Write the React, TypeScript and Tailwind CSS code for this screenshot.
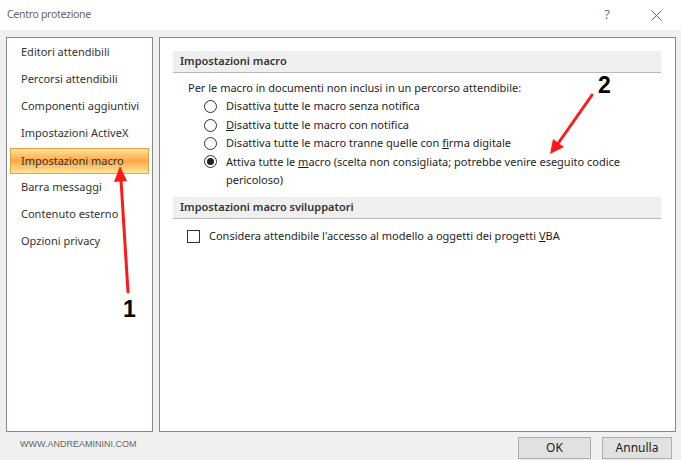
import React from "react";

const font = { fontFamily: '"Segoe UI", "Noto Sans", "Open Sans", sans-serif' };

function Radio({ checked }: { checked?: boolean }) {
  return (
    <span className="w-[13px] h-[13px] rounded-full border border-[#333] bg-white flex items-center justify-center shrink-0">
      {checked && <span className="w-[7px] h-[7px] rounded-full bg-[#222]" />}
    </span>
  );
}

function Arrows() {
  return (
    <svg className="absolute left-0 top-0 pointer-events-none" width="681" height="460">
      <line x1="128" y1="292" x2="121" y2="180" stroke="#ff1a1a" strokeWidth="3" strokeLinecap="round" />
      <polygon points="120,166 114,182 127,181" fill="#ff1a1a" />
      <line x1="592" y1="95" x2="557" y2="145" stroke="#ff1a1a" strokeWidth="3" strokeLinecap="round" />
      <polygon points="550,154 553,139 564,147" fill="#ff1a1a" />
    </svg>
  );
}

export default function App() {
  const items = [
    "Editori attendibili",
    "Percorsi attendibili",
    "Componenti aggiuntivi",
    "Impostazioni ActiveX",
    "Impostazioni macro",
    "Barra messaggi",
    "Contenuto esterno",
    "Opzioni privacy",
  ];
  return (
    <div className="relative w-[681px] h-[460px] bg-[#f0f0f0] flex flex-col text-[11px] text-[#1e1e1e] overflow-hidden whitespace-nowrap" style={font}>
      <div className="h-[30px] bg-white flex items-center pl-[7px] pr-[19px] shrink-0">
        <span className="text-[10.5px] text-[#666] tracking-[-0.3px]">Centro protezione</span>
        <span className="ml-auto text-[13px] text-[#777] mr-[41px]">?</span>
        <svg width="11" height="11" viewBox="0 0 11 11">
          <path d="M0.5 0.5 L10.5 10.5 M10.5 0.5 L0.5 10.5" stroke="#666" strokeWidth="1" />
        </svg>
      </div>
      <div className="flex gap-[6px] pl-[6px] pr-[5px] pt-[7px] h-[402px] shrink-0">
        <div className="w-[147px] border border-[#838790] bg-white pt-[1px] px-[3px] flex flex-col">
          {items.map((it) =>
            it === "Impostazioni macro" ? (
              <div
                key={it}
                className="h-[26px] mt-[1px] flex items-center pl-[10px] border border-[#e6a23c] bg-gradient-to-b from-[#fde39a] via-[#ffa640] to-[#fde79b] text-[#333]"
              >
                {it}
              </div>
            ) : (
              <div key={it} className="h-[27px] flex items-center pl-[11px] text-[#333]">
                {it}
              </div>
            )
          )}
        </div>
        <div className="flex-1 border border-[#838790] bg-white pt-[13px] pl-[13px] pr-[14px]">
          <div className="h-[22px] bg-[#efefef] border-b border-[#b9b9b9] flex items-center pl-[7px] font-semibold text-[#333]">
            Impostazioni macro
          </div>
          <div className="pl-[15px] pt-[6px] flex flex-col">
            <div className="h-[18px] flex items-center">Per le macro in documenti non inclusi in un percorso attendibile:</div>
            <div className="pl-[16px] flex flex-col">
              <div className="h-[19px] flex items-center gap-[9px]">
                <Radio />
                <span>Disattiva <u>t</u>utte le macro senza notifica</span>
              </div>
              <div className="h-[18px] flex items-center gap-[9px]">
                <Radio />
                <span><u>D</u>isattiva tutte le macro con notifica</span>
              </div>
              <div className="h-[19px] flex items-center gap-[9px]">
                <Radio />
                <span>Disattiva tutte le macro tranne quelle con <u>f</u>irma digitale</span>
              </div>
              <div className="flex gap-[9px]">
                <span className="pt-[2px]"><Radio checked /></span>
                <span className="leading-[18px]">
                  Attiva tutte le <u>m</u>acro (scelta non consigliata; potrebbe venire eseguito codice
                  <br />
                  pericoloso)
                </span>
              </div>
            </div>
          </div>
          <div className="mt-[8px] h-[22px] bg-[#efefef] border-b border-[#b9b9b9] flex items-center pl-[7px] font-semibold text-[#333]">
            Impostazioni macro sviluppatori
          </div>
          <div className="pl-[14px] pt-[9px] flex items-center gap-[9px]">
            <span className="w-[13px] h-[13px] border border-[#333] bg-white shrink-0" />
            <span>Considera attendibile l'accesso al modello a oggetti dei progetti <u>V</u>BA</span>
          </div>
        </div>
      </div>
      <div className="flex items-start pl-[20px] pr-[9px] pt-[5px]">
        <span className="mt-[1px] text-[9px] text-[#666]" style={{ fontFamily: '"Liberation Sans", Arial, sans-serif' }}>
          WWW.ANDREAMININI.COM
        </span>
        <button className="ml-auto w-[73px] h-[22px] bg-[#e1e1e1] border border-[#adadad] text-[12px] text-[#1e1e1e]">OK</button>
        <button className="ml-[11px] w-[70px] h-[22px] bg-[#e1e1e1] border border-[#adadad] text-[12px] text-[#1e1e1e]">Annulla</button>
      </div>
      <Arrows />
      <span className="absolute left-[123px] top-[298px] text-[23px] font-bold text-black leading-none" style={{ fontFamily: '"Liberation Sans", Arial, sans-serif' }}>1</span>
      <span className="absolute left-[598px] top-[74px] text-[23px] font-bold text-black leading-none" style={{ fontFamily: '"Liberation Sans", Arial, sans-serif' }}>2</span>
    </div>
  );
}
